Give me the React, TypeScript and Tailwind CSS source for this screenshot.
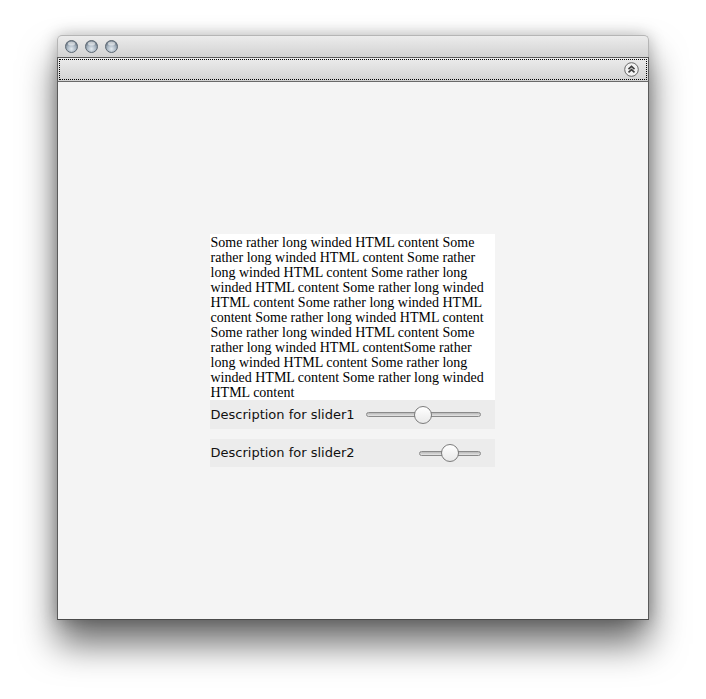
import React from "react"

const CHUNK = "Some rather long winded HTML content"
const TEXT =
  Array(9).fill(CHUNK).join(" ") + Array(3).fill(CHUNK).join(" ")

function TrafficLight() {
  return (
    <svg width="13" height="13" viewBox="0 0 13 13">
      <defs>
        <radialGradient id="tl" cx="50%" cy="70%" r="60%">
          <stop offset="0%" stopColor="#e4ebf1" />
          <stop offset="60%" stopColor="#a9b6c2" />
          <stop offset="100%" stopColor="#6e7c89" />
        </radialGradient>
      </defs>
      <circle cx="6.5" cy="6.5" r="6" fill="url(#tl)" stroke="#5f6a75" strokeWidth="1" />
      <ellipse cx="6.5" cy="3.6" rx="3.6" ry="2" fill="#ffffff" opacity="0.55" />
    </svg>
  )
}

function CollapseIcon() {
  return (
    <svg width="15" height="15" viewBox="0 0 15 15">
      <circle cx="7.5" cy="7.5" r="6.8" fill="#f1f1f1" stroke="#6a6a6a" strokeWidth="1" />
      <path d="M4.5 7.2 L7.5 4.4 L10.5 7.2" fill="none" stroke="#3c3c3c" strokeWidth="1.6" />
      <path d="M4.5 10.4 L7.5 7.6 L10.5 10.4" fill="none" stroke="#3c3c3c" strokeWidth="1.6" />
    </svg>
  )
}

function Slider({ width }: { width: number }) {
  return (
    <div className="relative flex h-[18px] items-center" style={{ width }}>
      <div className="h-[5px] w-full rounded-full border border-[#8a8a8a] bg-gradient-to-b from-[#b8b8b8] to-[#e6e6e6]" />
      <div className="absolute left-1/2 top-0 h-[18px] w-[18px] -translate-x-1/2 rounded-full border border-[#7c7c7c] bg-gradient-to-b from-white to-[#e9e9e9]" />
    </div>
  )
}

function SliderRow({ label, width, tall }: { label: string; width: number; tall?: boolean }) {
  return (
    <div
      className={
        tall
          ? "flex h-[29px] items-center justify-between bg-[#ececec] pl-px pr-[14px]"
          : "flex h-[28px] items-center justify-between bg-[#ececec] pl-px pr-[14px]"
      }
    >
      <span className="font-['DejaVu_Sans',sans-serif] text-[13px] text-[#111]">{label}</span>
      <Slider width={width} />
    </div>
  )
}

export default function App() {
  return (
    <div className="h-[699px] w-[706px] bg-white pl-[57px] pt-[35px]">
      <div className="flex h-[585px] w-[592px] flex-col rounded-t-[5px] shadow-[0_24px_36px_rgba(0,0,0,0.58),0_0_16px_rgba(0,0,0,0.25)]">
        {/* title bar */}
        <div className="flex h-[22px] items-center gap-[7px] rounded-t-[5px] border border-b-0 border-[#b5b5b5] bg-gradient-to-b from-[#ececec] to-[#d2d2d2] pl-[7px]">
          <TrafficLight />
          <TrafficLight />
          <TrafficLight />
        </div>
        {/* toolbar */}
        <div className="border-x border-t border-[#5a5a5a] bg-gradient-to-b from-[#ececec] to-[#d3d3d3] p-px">
          <div className="flex h-[21px] items-center justify-end border border-dotted border-black pr-[7px]">
            <CollapseIcon />
          </div>
        </div>
        {/* content */}
        <div className="flex flex-1 items-center justify-center border-x border-b border-t border-x-[#5a5a5a] border-b-[#4a4a4a] border-t-[#6a6a6a] bg-[#f4f4f4]">
          <div className="mr-[2px] w-[285px]">
            <div className="bg-white pl-px pt-px font-['Liberation_Serif','Times_New_Roman',serif] text-[14px] leading-[15px] text-black">
              {TEXT}
            </div>
            <SliderRow label="Description for slider1" width={115} tall />
            <div className="h-[10px]" />
            <SliderRow label="Description for slider2" width={62} />
          </div>
        </div>
      </div>
    </div>
  )
}
